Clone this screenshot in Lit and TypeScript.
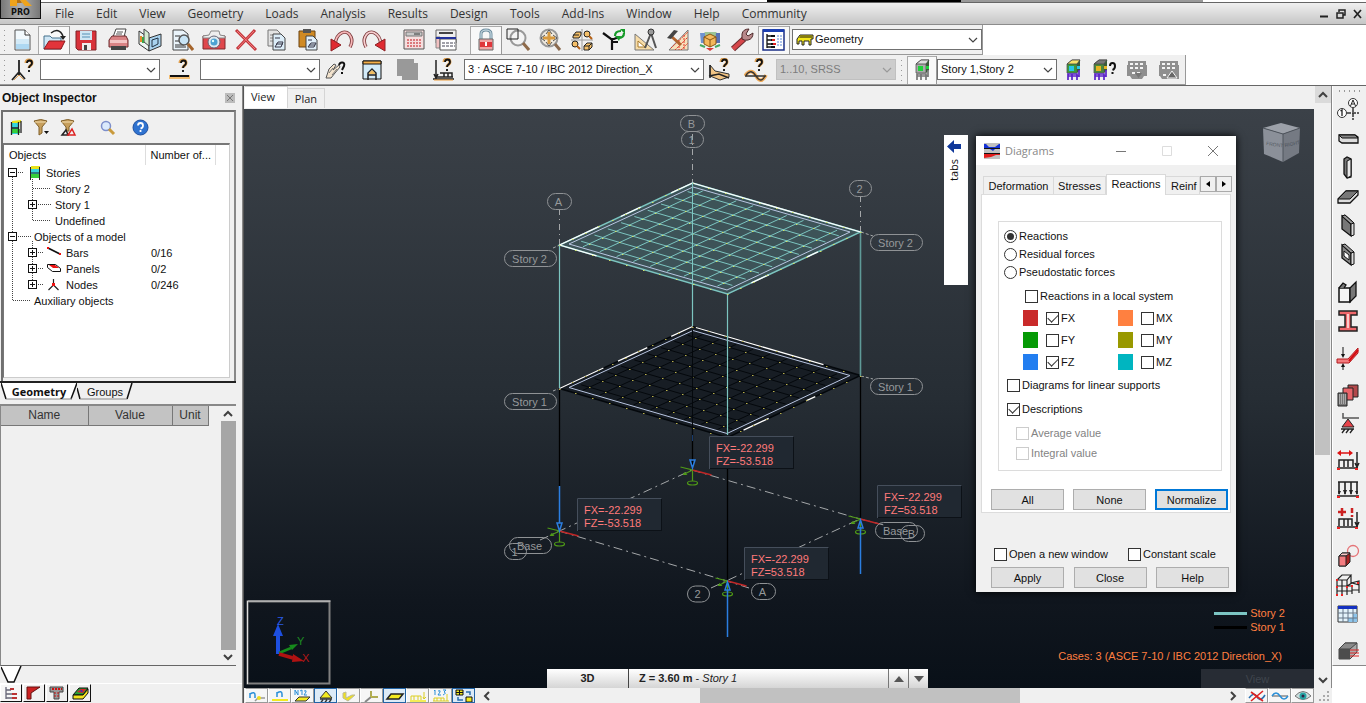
import { LitElement, html, css, svg, nothing } from "lit";
import type { SVGTemplateResult, TemplateResult } from "lit";
import { customElement, property } from "lit/decorators.js";
import { classMap } from "lit/directives/class-map.js";
import { styleMap } from "lit/directives/style-map.js";

/* ------------------------------------------------------------------ icons */

const question = (x: number, y: number) => svg`
  <path d="M${x} ${y + 3}q0-3 3-3t3 3q0 1.500-1.500 2.500T${x + 3} ${y + 8}" fill="none" stroke="#e0a050" stroke-width="3"/>
  <path d="M${x + 1} ${y + 3}q0-2.500 2.500-2.500t2.500 2.500q0 1.500-1.500 2.500T${x + 3} ${y + 8}M${x + 3} ${y + 10}v2" fill="none" stroke="#111" stroke-width="1.800"/>`;

const building = (roof: string, wall: string, win: string, leg: string) => svg`
  <path d="M6 6l5-4h8l-3 4v9H6z" fill="${wall}" stroke="#555" stroke-width=".8"/>
  <path d="M6 6l5-4h8l-3 4z" fill="${roof}" stroke="#444" stroke-width=".8"/>
  <path d="M16 6l3-4v10l-3 3z" fill="#3b5a3b"/>
  <path d="M8 8h5v5H8zM16 8h3v3h-3z" fill="${win}"/>
  <path d="M7 22v-6h9v6M18 19v-7M11 22v-6M7 18h11" fill="none" stroke="${leg}" stroke-width="1.700"/>`;

const icons: Record<string, SVGTemplateResult> = {
  fresh: svg`<path d="M5 2h10l5 5v15H5z" fill="#f2f9fd" stroke="#555"/><path d="M6 11h13v5H6z" fill="#d3eaf7"/><path d="M6 16h13v5H6z" fill="#aed8f2"/><path d="M15 2v5h5" fill="#fff" stroke="#333"/>`,
  open: svg`<path d="M2 21V8h6l2 2h9v11z" fill="#cfe6f5" stroke="#45708c"/><path d="M2 21l5-8h16l-4 8z" fill="#e2343b" stroke="#8c1a1f"/><path d="M9 5q8-6 12 3" fill="none" stroke="#222" stroke-width="1.500"/><path d="M18 8h6l-3 4z" fill="#222"/>`,
  save: svg`<path d="M2 3h20v19H4l-2-2z" fill="#d8323a" stroke="#7c2226"/><path d="M6 3h12v9H6z" fill="#cfe6f3"/><path d="M8 6h8M8 9h8" stroke="#5590b5"/><path d="M8 15h9v7H8z" fill="#eee"/><path d="M10 17h3v5h-3z" fill="#444"/>`,
  print: svg`<path d="M7 9l3-8h10l-2 8z" fill="#fff" stroke="#444"/><path d="M11 4h6M10 6h6" stroke="#555"/><path d="M3 12l3-4h14l2 4v7H3z" fill="#d98385" stroke="#6d2b2d"/><path d="M4 12h17v3H4z" fill="#f3c4c4"/><path d="M5 18h15v4H5z" fill="#444"/>`,
  book: svg`<path d="M1 3l10 7v13L1 16z" fill="#eef6f2" stroke="#333"/><path d="M23 6l-12 4v13l12-5z" fill="#a9d3ef" stroke="#333"/><path d="M6 1v13l5 4V5z" fill="#d5ecd2" stroke="#444"/><path d="M14 12l6-2v6l-6 3z" fill="none" stroke="#234"/><path d="M3 8v6" stroke="#e58b2b" stroke-width="2"/><path d="M5 9v6" stroke="#3aa648" stroke-width="2"/>`,
  preview: svg`<path d="M3 2h10l5 4v16H3z" fill="#eaf4fb" stroke="#444"/><path d="M5 8h5M5 13h4M5 17h9M5 19h11" stroke="#333"/><circle cx="14" cy="12" r="5" fill="#c7e4f6" stroke="#555" stroke-width="1.500"/><path d="M18 16l5 6" stroke="#a5642b" stroke-width="3"/>`,
  camera: svg`<path d="M1 8h22v13H1z" fill="#e0474c" stroke="#7e2a2d"/><path d="M1 8l6-1 2-4h8l1 4 5 1v2H1z" fill="#eee" stroke="#888"/><circle cx="12" cy="14" r="6" fill="#dfe9ef" stroke="#667"/><circle cx="12" cy="14" r="3.500" fill="#4ba3d3"/><circle cx="11" cy="13" r="1.200" fill="#dff"/>`,
  cross: svg`<path d="M2 2l20 20M21 2L3 21" stroke="#c4383d" stroke-width="3"/><path d="M3 3l18 18M20 3L4 20" stroke="#f07a7d"/>`,
  copy: svg`<path d="M2 2h9l3 3v13H2z" fill="#e3e3e3" stroke="#777"/><path d="M4 7h5M4 10h5M4 13h5" stroke="#888"/><path d="M7 6h8l4 4v12H7z" fill="#dcedf8" stroke="#444"/><path d="M9 10h5M9 19l3-5h5l-2 5zM10 16h7" fill="none" stroke="#334"/>`,
  paste: svg`<path d="M1 3h16v16H1z" fill="#d08a24" stroke="#6a4310"/><path d="M5 1h8v4H5z" fill="#555"/><path d="M8 8h7l4 4v10H8z" fill="#e0effa" stroke="#444"/><path d="M10 12h4M10 19l3-4h5l-2 4zM11 17h6" fill="none" stroke="#334"/>`,
  undo: svg`<path d="M5 17C6 4 17 0 21 9q2 5-1 10" fill="none" stroke="#7b3a3c" stroke-width="3.500"/><path d="M5 17C6 4 17 0 21 9q2 5-1 10" fill="none" stroke="#f6b6b7" stroke-width="1.800"/><path d="M1 11v12l10-6z" fill="#e02a31" stroke="#8d2226"/>`,
  redo: svg`<path d="M19 17C18 4 7 0 3 9q-2 5 1 10" fill="none" stroke="#7b3a3c" stroke-width="3.500"/><path d="M19 17C18 4 7 0 3 9q-2 5 1 10" fill="none" stroke="#f8cfd0" stroke-width="1.800"/><path d="M23 11v12l-10-6z" fill="#e02a31" stroke="#8d2226"/>`,
  calc: svg`<path d="M2 2h20v19H2z" fill="#f6dede" stroke="#555"/><path d="M4 4h16v4H4z" fill="#c9c9c9" stroke="#777"/><path d="M12 6h6" stroke="#333"/><path d="M5 12h15M5 15h15M5 18h15" stroke="#d4585c" stroke-width="1.500" stroke-dasharray="2 1"/>`,
  calc2: svg`<path d="M2 2h20v13H2z" fill="#eee" stroke="#666"/><path d="M5 5h14" stroke="#444" stroke-width="2"/><path d="M2 9h4v11H2z" fill="#f2c0c1" stroke="#888"/><path d="M6 11h16v11H6z" fill="#fff" stroke="#555"/><path d="M2 10h20" stroke="#23329a" stroke-width="2"/><path d="M8 15h13M8 18h13" stroke="#445" stroke-dasharray="3 1"/>`,
  lock: svg`<path d="M7 11V6q0-4 5-4t5 4v5" fill="none" stroke="#708fa0" stroke-width="3"/><path d="M7 11V6q0-4 5-4t5 4v5" fill="none" stroke="#d7e7ef"/><path d="M5 11h14v11H5z" fill="#f0a5a6" stroke="#666"/><path d="M6 14h12v5H6z" fill="#e0363c"/><path d="M11 14h2v4h-2z" fill="#fff"/>`,
  zoomwin: svg`<circle cx="12" cy="10" r="7.500" fill="#f4f4f4" stroke="#999" stroke-width="2"/><path d="M17 15l6 7" stroke="#8e6a4a" stroke-width="3"/><path d="M1 1h11v10H1z" fill="none" stroke="#222"/>`,
  zoomall: svg`<circle cx="11" cy="10" r="8.500" fill="#f0eadf" stroke="#999" stroke-width="2"/><path d="M17 16l5 6" stroke="#8a6a4e" stroke-width="3"/><path d="M11 4v12M5 10h12" stroke="#d89a3f" stroke-width="3"/><path d="M8 6l3-4 3 4M8 14l3 4 3-4M7 7l-4 3 4 3M15 7l4 3-4 3" fill="none" stroke="#555"/>`,
  views: svg`<path d="M12 1v22M1 12h22" stroke="#999"/><path d="M3 8l3-4h5v3l-2 3H3zM3 7h6" fill="#f5c069" stroke="#222"/><circle cx="17" cy="6" r="3" fill="#f5c069" stroke="#222"/><path d="M19 8l3 3" stroke="#b45f12" stroke-width="2"/><circle cx="5" cy="16" r="3" fill="#f5c069" stroke="#222"/><path d="M7 18l3 3" stroke="#b45f12" stroke-width="2"/><path d="M14 22v-4l3-3h5v4l-3 3zM14 18h5v4M19 18l3-3" fill="#f5c069" stroke="#222"/>`,
  nodes: svg`<path d="M1 5l8 6h3l5-2M10 11v11M10 14h6" fill="none" stroke="#111" stroke-width="2.200"/><path d="M13 8q0-5 6-5M22 5q0 5-6 5" fill="none" stroke="#159a28" stroke-width="2.200"/><path d="M18 1h5v5zM17 13l-4-5h6z" fill="#159a28"/>`,
  compass: svg`<path d="M1 6v16h19z" fill="#f7dca8" stroke="#777"/><path d="M4 13v6h7z" fill="#fff" stroke="#a87b28"/><path d="M17 5l-6 15M17 5l5 15" stroke="#555" stroke-width="2"/><circle cx="17" cy="4" r="3" fill="#999" stroke="#333"/>`,
  hatch: svg`<path d="M3 22L22 2v20z" fill="#f6e0bb" stroke="#777"/><path d="M9 22L22 9M15 22l7-7M13 12v10M18 7v15M5 20L22 4" stroke="#e23a2d" stroke-dasharray="2 1"/><path d="M6 9l9 8" stroke="#b0632e" stroke-width="3"/><path d="M1 10l7-8 4 1-7 8z" fill="#444"/>`,
  cube: svg`<path d="M3 8l4-4h11l4 4-4 2H7z" fill="#9cc496"/><path d="M2 5h5v10H3z" fill="#6f93d0"/><path d="M18 5h4v10h-5z" fill="#5a72b4"/><path d="M12 6l6 3v7l-6 3-6-3V9z" fill="#f3b85c" stroke="#8a5712"/><path d="M6 9l6 3 6-3M12 12v7" fill="none" stroke="#8a5712"/><path d="M2 17l5 2M22 17l-5 2" stroke="#4a6" stroke-width="2"/><path d="M8 20l4 3 4-3" fill="#d53a3a"/>`,
  wrench: svg`<path d="M3 21L14 11" stroke="#6b2d2f" stroke-width="6"/><path d="M3 21L14 11" stroke="#d6474b" stroke-width="4"/><path d="M12 6q1-5 7-5l-3 5 2 2 5-3q0 6-5 7-3 1-6-1z" fill="#b9898b" stroke="#4f2a2b"/>`,
  inspector: svg`<path d="M1 2h21v20H1z" fill="#fff" stroke="#1b2f86" stroke-width="1.500"/><path d="M1 1h21v3H1z" fill="#1d3fb0"/><path d="M5 6v14M5 8h4M5 12h4M5 16h4M5 19h4" fill="none" stroke="#111" stroke-width="1.300"/><path d="M9 8h4M9 12h3M9 16h4M9 19h4" stroke="#111" stroke-width="2"/><path d="M15 8h5M15 11h5M15 14h5M15 17h5" stroke="#5b86d8" stroke-dasharray="2 1"/><path d="M10 12h3M11 16h3" stroke="#d22" stroke-width="2"/>`,
  nodeq: svg`<path d="M8 2v12L1 22M8 14l6 7M8 14v4" fill="none" stroke="#222" stroke-width="1.800"/><path d="M3 22l5-5 5 5" fill="none" stroke="#e0a050"/>${question(15, 2)}`,
  barq: svg`<path d="M1 19h21" stroke="#f2bd72" stroke-width="4"/><path d="M2 18h19" stroke="#111" stroke-width="2"/>${question(12, 2)}`,
  handq: svg`<path d="M2 20l3-9 5-5 2 1-3 5 6-5 1 2-5 6-4 5z" fill="#f3e3cd" stroke="#555"/><path d="M5 15l4-5M8 17l5-6" stroke="#777"/><path d="M15 7q1-3 3.500-2.500T20 8l-2 4M18 14v2" fill="none" stroke="#111" stroke-width="2"/>`,
  view3: svg`<path d="M3 3h18v18H3z" fill="#d2eaf8" stroke="#111"/><path d="M3 3h18v3H3z" fill="#f5b04a" stroke="#111"/><path d="M8 22v-7l4-4 4 4v7M8 17h8" fill="none" stroke="#222" stroke-width="1.500"/><path d="M9 15l3-3 3 3v1H9z" fill="#f0bd62"/>`,
  solid: svg`<path d="M1 1h17v4h4v17H6v-4H1z" fill="#999"/>`,
  loadq: svg`<path d="M4 2v18M2 16l2 4 2-4M1 21h21" fill="none" stroke="#222" stroke-width="1.500"/><path d="M5 19h16M8 15h12v4M12 15v4M16 15v4" fill="none" stroke="#222" stroke-width="1.500"/><path d="M2 22h19" stroke="#ef9d3a"/>${question(12, 1)}`,
  diagq: svg`<path d="M2 7l5 6 14 3v3l-9 3-10-4z" fill="#f2c585" stroke="#333"/><path d="M2 7v13M1 18l10-2 10 4" fill="none" stroke="#222" stroke-width="1.500"/>${question(13, 1)}`,
  waveq: svg`<path d="M1 18q6-9 11 0t10-1" fill="none" stroke="#eea855" stroke-width="3.500"/><path d="M1 18h21M2 17q5-7 10 1t9 0" fill="none" stroke="#333" stroke-width="1.300"/>${question(12, 1)}`,
  bld1: building("#ddd", "#aaa", "#1fd13b", "#777"),
  bld2: building("#f6e36a", "#3a9b3a", "#25c7e8", "#5a22c8"),
  bldq: svg`<g transform="translate(-5 0)">${building("#777", "#4a8a3a", "#e6b422", "#5a22c8")}</g><path d="M17 8q0-3 2.500-3T22 8t-2.500 4M19.500 14v2" fill="none" stroke="#111" stroke-width="2"/>`,
  down3: svg`<path d="M3 3h18v4h1v11h-3l-2 3H7l-2-3H2V7h1z" fill="#8f8f8f"/><path d="M5 6h14M5 10h14M7 15h10" stroke="#f4f4f4" stroke-width="2" stroke-dasharray="3 2"/><path d="M10 15h7l-3.500 5z" fill="#777"/>`,
  up3: svg`<path d="M3 3h18v4h1v14H5l-2-3H2V7h1z" fill="#8f8f8f"/><path d="M5 6h14M5 10h14M6 17h5" stroke="#f4f4f4" stroke-width="2" stroke-dasharray="3 2"/><path d="M15 13l5 7H10z" fill="#666" stroke="#f4f4f4"/>`,
  axis: svg`<circle cx="17" cy="5" r="4.500" fill="#fff" stroke="#333"/><path d="M14.500 8L17 2l2.500 6M15.500 6h3" fill="none" stroke="#222"/><circle cx="6" cy="15" r="4.500" fill="#fff" stroke="#333"/><path d="M4.500 13L6 12v6" fill="none" stroke="#222" stroke-width="1.300"/><path d="M11 15h12M17 10v12" stroke="#333" stroke-width="1.500" stroke-dasharray="4 1"/>`,
  beam: svg`<path d="M3 8h16l3 2v6H6l-3-2z" fill="#ddd" stroke="#111" stroke-width="1.300"/><path d="M3 8h16l3 3H6z" fill="#888" stroke="#111"/>`,
  column: svg`<path d="M8 3l3-2 4 2v18l-4 1-3-4z" fill="#777" stroke="#111" stroke-width="1.300"/><path d="M11 5l4-2v17l-4 2z" fill="#e8e8e8" stroke="#111"/>`,
  slab: svg`<path d="M2 14l8-8h12v4l-8 8H2z" fill="#ddd" stroke="#111" stroke-width="1.300"/><path d="M2 14l8-8h12l-8 8z" fill="#777" stroke="#111"/>`,
  wall: svg`<path d="M6 2l9 8v12L6 15z" fill="#777" stroke="#111" stroke-width="1.300"/><path d="M6 2l3-1 9 8v12l-3 1V10z" fill="#ddd" stroke="#111"/><path d="M6 2l3-1 9 8-3 1z" fill="#999" stroke="#111"/>`,
  opening: svg`<path d="M6 2l9 8v12L6 15z" fill="#888" stroke="#111" stroke-width="1.300"/><path d="M8 8l5 4v5l-5-4z" fill="#fff" stroke="#111"/><path d="M15 10l3-1v12l-3 1z" fill="#ddd" stroke="#111"/><path d="M6 2l3-1 9 8-3 1z" fill="#999" stroke="#111"/>`,
  cladding: svg`<path d="M3 8h11v14H3z" fill="#f4f4f4" stroke="#111" stroke-width="1.500"/><path d="M3 8l4-5 3 2-2 3M14 8l6-6v14l-6 6z" fill="#777" stroke="#111" stroke-width="1.300"/>`,
  section: svg`<path d="M3 2h18v4h-6v12h6v4H3v-4h6V6H3z" fill="#f0676b" stroke="#222" stroke-width="1.500"/><path d="M11 5h2v14h-2z" fill="#fbcaca"/>`,
  thickness: svg`<path d="M1 13h11L22 2v5l-9 10H1z" fill="#f27a7c" stroke="#b31a1e"/><path d="M13 15L22 4" stroke="#d30d12" stroke-width="2"/><path d="M7 1v8M7 24v-4" stroke="#111"/><path d="M5 8h4l-2 4zM5 21h4l-2-4z" fill="#111"/>`,
  layers: svg`<path d="M12 2h10v12H12z" fill="#b2484b" stroke="#222"/><path d="M7 5h10v12H7z" fill="#e8646a" stroke="#222"/><path d="M2 10h9v13H2z" fill="#777" stroke="#222"/><path d="M3 12h8M3 14h8M3 16h8M3 18h8M3 20h8" stroke="#ddd" stroke-dasharray="1 1"/>`,
  support: svg`<path d="M7 1v5h16" fill="none" stroke="#555" stroke-width="1.500"/><path d="M12 7l6 8H6z" fill="#e8434a" stroke="#222"/><path d="M5 17h13M6 21l3-4M10 21l3-4M14 21l3-4" stroke="#222" stroke-width="1.300"/>`,
  loadcase: svg`<path d="M4 4h10" stroke="#d11" stroke-width="1.500"/><path d="M1 4l4-3v6zM17 4l-4-3v6z" fill="#d11"/><path d="M1 19h21M3 18v-7h14v7M8 11v7M12 11v7M21 3v14M19 14l2 4 2-4" fill="none" stroke="#222" stroke-width="1.500"/><path d="M1 20h3M19 20h3" stroke="#e22" stroke-width="2"/>`,
  loads: svg`<path d="M2 4h20M3 4v12M9 4v12M15 4v12M21 4v12M1 18h22" fill="none" stroke="#222" stroke-width="1.600"/><path d="M7 12l2 5 2-5zM13 12l2 5 2-5zM2 13l1 4 2-4zM19 13l2 4 1-4z" fill="#222"/><path d="M1 19h3M20 19h3" stroke="#e22" stroke-width="2"/>`,
  combos: svg`<path d="M6 1v8M2 5h8M16 1v5M16 8v2" stroke="#c22" stroke-width="2.500"/><path d="M1 20h21M3 19v-7h13v7M8 12v7M12 12v7M21 5v13M19 15l2 4 2-4" fill="none" stroke="#222" stroke-width="1.500"/><path d="M1 21h3M19 21h3" stroke="#e22" stroke-width="2"/>`,
  solids: svg`<circle cx="17" cy="7" r="5.500" fill="none" stroke="#e57377" stroke-width="1.300"/><path d="M3 12l3-3h8v9l-4 4H3z" fill="#a22" stroke="#222"/><path d="M3 12l3-3h8l-4 3z" fill="#f9c5c6" stroke="#222"/><path d="M3 12h7v10H3z" fill="#f47c80" stroke="#222"/>`,
  frame: svg`<path d="M1 7l5-5h9l-4 5H1v15M11 7v15M6 7v15M1 13h15M15 2v8l8-2v12M16 13v8M11 13l5-3 7 2M1 18h15M16 17h7" fill="none" stroke="#222" stroke-width="1.200"/><path d="M1 6v2M1 13v2M11 13v2M16 12v2M22 9v2M6 21v2M1 21v2" stroke="#e22" stroke-width="2"/>`,
  table: svg`<path d="M2 4h19v16H2z" fill="#e4f3fb" stroke="#333"/><path d="M2 4h19v3H2z" fill="#1430c0"/><path d="M17 12h4v8h-4zM12 16h5v4h-5z" fill="#8cc4ea"/><path d="M7 7v13M12 7v13M17 7v13M2 11h19M2 16h19" stroke="#678"/>`,
  results: svg`<path d="M3 10l6-6h12v9l-7 7H3z" fill="#aaa" stroke="#444"/><path d="M3 10l6-6h12l-7 6z" fill="#8a8a8a" stroke="#444"/><path d="M3 10h11v10H3z" fill="#4c4c4c"/><path d="M14 11h9M14 14h9M14 17h9" stroke="#d22"/>`,
};

const icon = (name: string, size = 24) =>
  html`<svg class="icon" width=${size} height=${size} viewBox="0 0 24 24" aria-hidden="true">${icons[name]}</svg>`;

const chevron = html`<svg class="chev" width="10" height="6" viewBox="0 0 10 6" aria-hidden="true"><path d="M1 1l4 4 4-4" fill="none" stroke="currentColor" stroke-width="1.200"/></svg>`;

const arrow = (dir: "up" | "down" | "left" | "right") => {
  const d = { up: "M1 7l4-4 4 4", down: "M1 3l4 4 4-4", left: "M7 1L3 5l4 4", right: "M3 1l4 4-4 4" }[dir];
  return html`<svg width="10" height="10" viewBox="0 0 10 10" aria-hidden="true"><path d="${d}" fill="none" stroke="#404040" stroke-width="2"/></svg>`;
};

const base = css`
  * { box-sizing: border-box; }
  svg { display: block; flex: none; }
  button {
    font: inherit;
    color: inherit;
    margin: 0;
    padding: 0;
    border: 0;
    border-radius: 0;
    background: none;
    display: flex;
    align-items: center;
    justify-content: center;
  }
`;

/* ------------------------------------------------------- object inspector */

type Row = { label: string; count?: string; level: 1 | 2; text: number; art: SVGTemplateResult };

const box = (x: number, minus: boolean) => svg`
  <rect x="${x - 4}.5" y="3.500" width="8" height="8" fill="#fff" stroke="#111"/>
  <path d="M${x - 2} 7.500h5${minus ? "" : `M${x}.5 5v5`}" stroke="#111"/>`;
const dots = (d: string) => svg`<path d="${d}" fill="none" stroke="#444" stroke-dasharray="1 1"/>`;

const rows: Row[] = [
  { label: "Stories", level: 1, text: 42, art: svg`${dots("M8.500 8v8M14 7.500h6M28.500 12v4")}${box(8, true)}<path d="M27 2h9v11h-9z" fill="#35d6dd"/><path d="M27 1h9v3h-9z" fill="#e9e21a"/><path d="M27 9h9v4h-9z" fill="#36cf3c"/><path d="M26.500 2v13M35.500 2v13M27 8h8" stroke="#222"/>` },
  { label: "Story 2", level: 2, text: 51, art: dots("M8.500 0v16M28.500 0v16M29 7.500h18") },
  { label: "Story 1", level: 2, text: 51, art: svg`${dots("M8.500 0v16M28.500 0v16M34 7.500h13")}${box(28, false)}` },
  { label: "Undefined", level: 2, text: 51, art: dots("M8.500 0v16M28.500 0v8M29 7.500h18") },
  { label: "Objects of a model", level: 1, text: 30, art: svg`${dots("M8.500 0v16M14 7.500h13M28.500 12v4")}${box(8, true)}` },
  { label: "Bars", count: "0/16", level: 2, text: 62, art: svg`${dots("M8.500 0v16M28.500 0v16M34 7.500h6")}${box(28, false)}<path d="M44 3l12 6" stroke="#111" stroke-width="1.800"/><path d="M43 2h2v2h-2zM55 8h2v2h-2z" fill="#e11"/>` },
  { label: "Panels", count: "0/2", level: 2, text: 62, art: svg`${dots("M8.500 0v16M28.500 0v16M34 7.500h6")}${box(28, false)}<path d="M43.500 3.500h8l5 4v3h-8l-5-4z" fill="#fff" stroke="#111"/><path d="M45 4h6l4 3h-6z" fill="#e11"/>` },
  { label: "Nodes", count: "0/246", level: 2, text: 62, art: svg`${dots("M8.500 0v16M28.500 0v8M34 7.500h6")}${box(28, false)}<path d="M49.500 2v6l-5 5M49.500 8l5 5" fill="none" stroke="#222" stroke-width="1.200"/><path d="M48 6h3v3h-3z" fill="#e11"/>` },
  { label: "Auxiliary objects", level: 1, text: 30, art: dots("M8.500 0v8M9 7.500h18") },
];

@customElement("object-inspector")
export class ObjectInspector extends LitElement {
  static styles = [
    base,
    css`
      :host { display: flex; flex-direction: column; font: 11px/16px "Liberation Sans", Arial, sans-serif; color: #111; background: #f0f0f0; }
      .title { display: flex; align-items: center; justify-content: space-between; height: 24px; padding: 0 7px 0 2px; font-size: 12px; font-weight: bold; }
      .close { width: 10px; height: 10px; background: #bcbcbc; }
      .panel { margin: 0 6px 0 1px; border: 2px solid #707070; border-right-color: #888; border-bottom: 0; display: flex; flex-direction: column; height: 271px; }
      .bar { display: flex; align-items: center; height: 31px; flex: none; gap: 8px; padding-left: 4px; }
      .bar button { width: 18px; height: 20px; }
      .bar .wide { margin-left: 14px; }
      .bar .help { margin-left: 6px; }
      .list { flex: 1; background: #fff; border: 1px solid #777; border-width: 2px 1px 1px 1px; border-right-color: #ccc; border-bottom-color: #ccc; margin: 0 4px 3px 0; overflow: hidden; }
      table { border-collapse: collapse; width: 100%; table-layout: fixed; }
      th, td { padding: 0; text-align: left; font-weight: normal; }
      th { height: 20px; padding: 0 5px; white-space: nowrap; border-right: 1px solid #ddd; }
      th:last-child { border: 0; }
      .c1 { width: 141px; }
      .c2 { width: 70px; }
      td { height: 16px; }
      td + td { padding-left: 6px; }
      .node { display: grid; height: 16px; white-space: nowrap; }
      .node > * { grid-area: 1 / 1; }
      .tabs { display: flex; height: 19px; margin-right: 6px; border-top: 2px solid #222; padding-left: 1px; }
      .tab { display: grid; place-items: center; height: 17px; }
      .tab > * { grid-area: 1 / 1; }
      .tab.on span { font: bold 11px/16px "Open Sans", sans-serif; }
      .props { flex: 1; display: flex; margin: 4px 6px 0 0; border-top: 2px solid #888; border-bottom: 1px solid #666; border-left: 1px solid #888; min-height: 0; }
      .head { flex: 1; }
      .head table { width: 207px; font-size: 12px; color: #333; }
      .head th { height: 19px; background: #c3c3c3; border: 1px solid #777; border-top: 0; border-left: 0; text-align: center; padding: 0; }
      .k1 { width: 87px; }
      .k2 { width: 84px; }
      .k3 { width: 36px; }
      .scroll { width: 16px; display: flex; flex-direction: column; align-items: center; padding: 3px 0; gap: 2px; }
      .thumb { flex: 1; width: 15px; background: #a6a6a6; }
      .foot { height: 17px; padding-left: 1px; }
      .views { height: 20px; display: flex; border-top: 1px solid #fff; gap: 1px; }
      .views button { width: 22px; height: 18px; border: 1px solid #fff; border-right: 1px solid #111; border-bottom: 1px solid #111; }
      .views button:first-child { background: #f6f6f6; }
    `,
  ];

  render() {
    return html`
      <div class="title"><span>Object Inspector</span>
        <button class="close" aria-label="Close"><svg width="8" height="8" viewBox="0 0 8 8"><path d="M1 1l6 6M7 1L1 7" stroke="#777"/></svg></button>
      </div>
      <div class="panel">
        <div class="bar">
          <button aria-label="Stories"><svg width="14" height="18" viewBox="0 0 14 18"><path d="M3 3h7v12H3z" fill="#35d6dd"/><path d="M3 2l9-1v3H3z" fill="#e9e21a"/><path d="M3 10h8v4H3z" fill="#36cf3c"/><path d="M2.500 3v13M9.500 3v13M12 2v12M2 9h8" stroke="#222" stroke-width="1.300"/></svg></button>
          <button aria-label="Filter"><svg width="18" height="18" viewBox="0 0 18 18"><path d="M1 2q7-3 13 0L9 8v6l-3 2V8z" fill="#c79f5c" stroke="#80602a"/><path d="M2 3h11" stroke="#f4dfb2"/><path d="M11 12h5l-2.500 3z" fill="#111"/></svg></button>
          <button aria-label="Filter nodes"><svg width="18" height="18" viewBox="0 0 18 18"><path d="M2 2q7-3 13 0l-5 6v4H7V8z" fill="#c79f5c" stroke="#80602a"/><path d="M3 3h11" stroke="#f4dfb2"/><path d="M3 16l4-5 2 5z" fill="none" stroke="#222" stroke-width="1.500"/><path d="M9 16l4-6 3 6z" fill="none" stroke="#d22" stroke-width="1.500"/></svg></button>
          <button class="wide" aria-label="Find"><svg width="16" height="16" viewBox="0 0 16 16"><circle cx="6" cy="6" r="4.500" fill="#dbeafc" stroke="#7d8fcb" stroke-width="1.500"/><path d="M9 9l5 5" stroke="#c99a3c" stroke-width="3"/></svg></button>
          <button class="help" aria-label="Help"><svg width="17" height="17" viewBox="0 0 17 17"><circle cx="8.500" cy="8.500" r="7.500" fill="#2f73d0" stroke="#1e4f9e"/><path d="M6 6.500Q6 4 8.500 4T11 6.500t-2.500 3M8.500 11v2" fill="none" stroke="#fff" stroke-width="1.800"/></svg></button>
        </div>
        <div class="list">
          <table>
            <thead><tr><th class="c1">Objects</th><th class="c2">Number of...</th><th></th></tr></thead>
            <tbody>
              ${rows.map(
                (r) => html`<tr>
                  <td><div class="node">
                    <svg width="60" height="16" viewBox="0 0 60 16" aria-hidden="true">${r.art}</svg>
                    <span style=${styleMap({ paddingLeft: `${r.text}px` })}>${r.label}</span>
                  </div></td>
                  <td>${r.count ?? nothing}</td><td></td>
                </tr>`
              )}
            </tbody>
          </table>
        </div>
      </div>
      <div class="tabs">
        <button class="tab on"><svg width="76" height="17" viewBox="0 0 76 17"><path d="M0 0l5 16h66l5-16z" fill="#fff"/><path d="M0 0l5 16M70 16L76 0" stroke="#111" stroke-width="1.500"/><path d="M5 16h66" stroke="#888"/></svg><span>Geometry</span></button>
        <button class="tab"><svg width="56" height="17" viewBox="0 0 56 17"><path d="M0 5l3 11M50 16l5-16" stroke="#111" stroke-width="1.500"/><path d="M3 16h47" stroke="#888"/></svg><span>Groups</span></button>
      </div>
      <div class="props">
        <div class="head"><table>
          <thead><tr><th class="k1">Name</th><th class="k2">Value</th><th class="k3">Unit</th></tr></thead>
        </table></div>
        <div class="scroll">${arrow("up")}<div class="thumb"></div>${arrow("down")}</div>
      </div>
      <div class="foot"><svg width="22" height="17" viewBox="0 0 22 17"><path d="M0 0l7 16h6l7-16z" fill="#fff"/><path d="M0 1l7 15h6l7-16" fill="none" stroke="#111" stroke-width="1.500"/></svg></div>
      <div class="views">
        <button aria-label="Objects"><svg width="16" height="14" viewBox="0 0 16 14"><path d="M3 1v12M3 4h5M3 8h7M3 12h7" fill="none" stroke="#667" stroke-width="1.300"/><path d="M7 3h4M9 8h5M9 12h5" stroke="#b33" stroke-width="2"/></svg></button>
        <button aria-label="Sections"><svg width="16" height="14" viewBox="0 0 16 14"><path d="M1 1h13L5 7v6H1z" fill="#c22" stroke="#611"/></svg></button>
        <button aria-label="Connections"><svg width="16" height="14" viewBox="0 0 16 14"><path d="M1 1h13v5h-4v7H5V6H1z" fill="#999" stroke="#444"/><path d="M3 3h10" stroke="#c11" stroke-width="2" stroke-dasharray="2 1"/><path d="M6 6v6M9 6v6" stroke="#c11" stroke-dasharray="2 1"/></svg></button>
        <button aria-label="Maps"><svg width="17" height="14" viewBox="0 0 17 14"><path d="M1 9l6-7h9l-5 7z" fill="#27a034" stroke="#111"/><path d="M5 6l4-3h5l-3 4z" fill="#d22"/><path d="M7 5l3-1 1 2z" fill="#23c"/><path d="M1 9h10l5-6v4l-5 6H1z" fill="#f2e21c" stroke="#111"/></svg></button>
      </div>
    `;
  }
}

/* ---------------------------------------------------------------- canvas */

type P = [number, number];
type Edge = "LT" | "TR" | "LB" | "BR";
const mix = (a: P, b: P, t: number): P => [a[0] + (b[0] - a[0]) * t, a[1] + (b[1] - a[1]) * t];
const pts = (list: P[]) => list.map((p) => p.map((n) => Math.round(n * 10) / 10).join(",")).join(" ");

const slab = (dy: number, line: string, fill: string, dot: string, lit: [Edge, number, number][]) => {
  const T: P = [692.5, 183 + dy], R: P = [860.5, 232 + dy], B: P = [727.5, 294 + dy], L: P = [559.5, 245 + dy];
  const ends: Record<Edge, [P, P]> = { LT: [L, T], TR: [T, R], LB: [L, B], BR: [B, R] };
  const mesh: SVGTemplateResult[] = [];
  const marks: SVGTemplateResult[] = [];
  for (let i = 1; i < 10; i++) {
    const t = i / 10;
    mesh.push(svg`<polyline points="${pts([mix(mix(T, R, t), mix(L, B, t), 0.05), mix(mix(T, R, t), mix(L, B, t), 0.95)])}"/>`);
    mesh.push(svg`<polyline points="${pts([mix(mix(T, L, t), mix(R, B, t), 0.05), mix(mix(T, L, t), mix(R, B, t), 0.95)])}"/>`);
  }
  for (let i = 0; i <= 10; i++)
    for (let j = 0; j <= 10; j++) {
      const [x, y] = mix(mix(T, R, i / 10), mix(L, B, i / 10), j / 10);
      marks.push(svg`<rect x="${Math.round(x) - 1}" y="${Math.round(y)}" width="1.500" height="1"/>`);
    }
  return svg`
    <polygon points="${pts([T, R, B, L])}" fill="${fill}"/>
    <g stroke="${line}" fill="none">${mesh}<polygon points="${pts([T, R, B, L])}" stroke-width="1.500"/></g>
    <g stroke="#fff" stroke-width="1.300" fill="none">${lit.map(([e, a, b]) => svg`<polyline points="${pts([mix(ends[e][0], ends[e][1], a), mix(ends[e][0], ends[e][1], b)])}"/>`)}</g>
    <polygon points="${pts([[693, 187 + dy], [850, 232 + dy], [727, 290 + dy], [569, 244 + dy]])}" fill="none" stroke="#b9c6e2"/>
    <g fill="${dot}">${marks}</g>`;
};

const pill = (cx: number, cy: number, w: number, t: string) => svg`
  <rect x="${cx - w / 2}" y="${cy - 8}" width="${w}" height="16" rx="8" fill="none" stroke="#8f9295"/>
  <text x="${cx - 1}" y="${cy + 4}" text-anchor="middle" fill="#96999b">${t}</text>`;

const tip = (x: number, y: number, fz: string) => svg`
  <rect x="${x}.5" y="${y}.5" width="84" height="32" fill="#202831" stroke="#0c1117"/>
  <path d="M${x}.5 ${y + 33}V${y}.5h84" fill="none" stroke="#454e5b"/>
  <g fill="#ff7a7a"><text x="${x + 7}" y="${y + 16}">FX=-22.299</text><text x="${x + 7}" y="${y + 29}">${fz}</text></g>`;

const foot = (x: number, y: number) => svg`
  <path d="M${x - 12} ${y - 3}l12 3v11M${x} ${y}l-8 4" stroke="#4f9a17" fill="none" stroke-width="1.200"/>
  <path d="M${x - 10} ${y + 5}l2-3 3 3z" fill="#4f9a17"/>
  <ellipse cx="${x}" cy="${y + 13}" rx="5" ry="2" fill="none" stroke="#4f9a17" stroke-width="1.200"/>
  <path d="M${x} ${y}l19 5" stroke="#c02626" stroke-width="1.300"/>`;

@customElement("model-canvas")
export class ModelCanvas extends LitElement {
  static styles = [
    base,
    css`
      :host { display: block; position: relative; overflow: hidden; background: linear-gradient(#3b4148, #262d34 50%, #10161e 85%, #091018); font: 11px/14px "Liberation Sans", Arial, sans-serif; color: #ff7f40; }
      .scene { width: 1070px; height: 579px; }
      .scene text { font-size: 11px; }
      .tabs { position: absolute; right: 346px; top: 26px; width: 24px; height: 150px; background: #fff; display: flex; flex-direction: column; align-items: center; gap: 6px; padding: 5px 4px 0 0; color: #111; }
      .tabs span { writing-mode: vertical-rl; transform: rotate(180deg); line-height: 16px; font-family: "Open Sans", sans-serif; }
      .cube { position: absolute; right: 9px; top: 10px; }
      .legend { position: absolute; right: 29px; bottom: 54px; display: grid; grid-template-columns: 33px auto; gap: 0 3px; align-items: center; }
      .legend i { height: 3px; background: #7cc5c3; }
      .legend .s1 { background: #000; }
      .cases { position: absolute; right: 32px; bottom: 25px; }
      .viewbtn { position: absolute; right: 0; bottom: 0; width: 113px; height: 19px; background: #272c34; color: #3f454d; }
      .level { position: absolute; left: 303px; bottom: 0; width: 381px; height: 19px; display: flex; background: linear-gradient(#fff, #d5d5d5); color: #222; font-size: 12px; line-height: 19px; }
      .level .mode { width: 82px; border-right: 1px solid #444; font-size: 11px; font-weight: bold; }
      .level .z { flex: 1; padding-left: 10px; font-size: 11px; }
      .level .step { width: 20px; border-left: 1px solid #777; }
      .dialog { position: absolute; right: 78px; top: 27px; width: 260px; }
    `,
  ];

  render() {
    return html`
      <svg class="scene" width="1070" height="579" viewBox="244 109 1070 579" role="img" aria-label="Model view">
        <g fill="none" stroke="#a4a7a9">
          <g stroke-dasharray="6 4 1 4"><path d="M692.500 134v49M559.500 209v36M860.500 196v36"/></g>
          <path d="M861 232l12 4M861 376l12 3M553 248l7-3M553 391l7-3" stroke-dasharray="3 2"/>
          <g stroke-dasharray="9 4 2 4"><path d="M540 540l152-70M559 531l168 50 22 7M692 470l168 49 24 6M711 588l149-69"/></g>
        </g>
        <path d="M692.500 326v142M559.500 388v98M860.500 376v145M727.500 435v147" stroke="#000" stroke-width="1.300"/>
        <path d="M692.500 419v22" stroke="#173a6c"/>
        ${slab(143.5, "#04080c", "#171d24", "#b9b04a", [
          ["LT", 0, 0.33], ["LT", 0.44, 0.66], ["LT", 0.84, 1], ["TR", 0.02, 0.78], ["BR", 0.12, 0.31], ["BR", 0.59, 0.66],
        ])}
        <path d="M692.500 330v105" stroke="#04080c"/>
        <path d="M727.500 294v141M692.500 183v143M559.500 245v143" stroke="#7cc5c0" stroke-width="1.200"/>
        <path d="M860.500 232v144" stroke="#5f9a98" stroke-width="1.600"/>
        ${slab(0, "#7cc5c0", "#3d5358", "#cfe36a", [
          ["LT", 0, 0.3], ["LT", 0.46, 0.61], ["LT", 0.84, 1], ["TR", 0, 1], ["LB", 0, 0.22], ["BR", 0.18, 0.31], ["BR", 0.6, 0.68],
        ])}
        <path d="M692.500 183v112" stroke="#7cc5c0"/>
        ${foot(692.5, 470)}${foot(559.5, 531)}${foot(727.5, 581)}${foot(860.5, 519)}
        <g fill="none" stroke="#2b7ee0" stroke-width="1.500">
          <path d="M690 460h5l-2.500 8zM559.500 486v37M557 523h5l-2.500 8z"/>
          <path d="M727.500 637v-47M725 590h5l-2.500-8zM860.500 574v-47M858 528h5l-2.500-8z"/>
        </g>
        ${tip(709, 436, "FZ=-53.518")}${tip(577, 498, "FZ=-53.518")}${tip(877, 485, "FZ=53.518")}${tip(744, 547, "FZ=53.518")}
        ${pill(692.5, 123.5, 24, "B")}${pill(692.5, 139.5, 22, "1")}${pill(559.5, 201.5, 24, "A")}${pill(860.5, 188.5, 22, "2")}
        ${pill(530.5, 258.5, 52, "Story 2")}${pill(896.5, 242.5, 52, "Story 2")}
        ${pill(530.5, 401.5, 52, "Story 1")}${pill(896.5, 386.5, 52, "Story 1")}
        ${pill(530.5, 545.5, 42, "Base")}${pill(515.5, 551.5, 22, "1")}${pill(896.5, 530.5, 42, "Base")}${pill(912.5, 533.5, 24, "B")}
        ${pill(698.5, 594, 22, "2")}${pill(763.5, 591.5, 24, "A")}
        <rect x="247.500" y="601.500" width="82" height="82" fill="none" stroke="#808080" stroke-width="2"/>
        <path d="M247.500 684v-83h83" fill="none" stroke="#ddd"/>
        <path d="M278 654v-20" stroke="#1d4fe0" stroke-width="4"/><path d="M273 636l5-12 5 12z" fill="#1d4fe0"/>
        <path d="M279 653l12-5" stroke="#168a1c" stroke-width="2.500"/><path d="M289 645l9-1-6 6z" fill="#168a1c"/>
        <path d="M279 654l14 4" stroke="#b01212" stroke-width="3.500"/><path d="M293 654l11 7-12 1z" fill="#b01212"/>
        <text x="277" y="625" fill="#2a5ce8">Z</text><text x="297" y="645" fill="#1d8a22">Y</text><text x="302" y="662" fill="#b51818">X</text>
      </svg>
      <div class="tabs">
        <svg width="14" height="13" viewBox="0 0 14 13"><path d="M0 6.500L7 0v4h7v5H7v4z" fill="#10389a"/></svg>
        <span>tabs</span>
      </div>
      <svg class="cube" width="46" height="46" viewBox="0 0 46 46" aria-hidden="true">
        <path d="M4 9l18-5 19 5-17 6z" fill="#9ca1a9"/><path d="M4 9l20 6v28L5 35z" fill="#8b9099"/><path d="M24 15l17-6-1 25-16 9z" fill="#757a83"/>
        <path d="M4 9l20 6 17-6M24 15v28" fill="none" stroke="#4e545c"/>
        <text x="7" y="26" transform="rotate(8 7 26)" fill="#555b64" font-size="5">FRONT</text>
        <text x="26" y="28" transform="rotate(-12 26 28)" fill="#4b515a" font-size="5">RIGHT</text>
      </svg>
      <div class="legend"><i></i><span>Story 2</span><i class="s1"></i><span>Story 1</span></div>
      <div class="cases">Cases: 3 (ASCE 7-10 / IBC 2012 Direction_X)</div>
      <button class="viewbtn">View</button>
      <div class="level">
        <button class="mode">3D</button>
        <span class="z"><b>Z = 3.60 m</b> - <em>Story 1</em></span>
        <button class="step" aria-label="Level up"><svg width="10" height="6" viewBox="0 0 10 6"><path d="M0 6l5-6 5 6z" fill="#555"/></svg></button>
        <button class="step" aria-label="Level down"><svg width="10" height="6" viewBox="0 0 10 6"><path d="M0 0l5 6 5-6z" fill="#555"/></svg></button>
      </div>
      <diagrams-dialog class="dialog"></diagrams-dialog>
    `;
  }
}

/* ---------------------------------------------------------------- dialog */

@customElement("diagrams-dialog")
export class DiagramsDialog extends LitElement {
  static styles = [
    base,
    css`
      :host { display: block; background: #f0f0f0; color: #111; font: 11px/14px "Liberation Sans", Arial, sans-serif; box-shadow: 0 0 8px #000; padding-bottom: 4px; }
      .title { display: flex; align-items: center; height: 29px; background: #fff; padding: 0 17px 0 8px; gap: 5px; font: 11px/16px "Open Sans", sans-serif; color: #888; }
      .title span { flex: 1; }
      .title button { width: 12px; height: 16px; margin-left: 29px; }
      .tabs { display: flex; align-items: flex-end; height: 29px; margin: 0 4px 0 7px; position: relative; }
      .tabs button { height: 18px; border: 1px solid #d9d9d9; border-bottom: 0; white-space: nowrap; }
      .tabs .t1 { width: 71px; }
      .tabs .t2 { width: 52px; border-left: 0; }
      .tabs .t3 { width: 60px; height: 21px; background: #fff; margin-bottom: -1px; padding-bottom: 2px; }
      .tabs .t4 { flex: 1; justify-content: flex-start; padding-left: 5px; border-left: 0; }
      .tabs .nav { width: 16px; height: 16px; border: 1px solid #aaa; align-self: flex-end; margin-bottom: 2px; background: #f0f0f0; }
      .pane { margin: 0 5px; padding: 26px 0 3px 9px; background: #fff; border: 1px solid #dcdcdc; height: 319px; }
      fieldset { border: 1px solid #dcdcdc; margin: 0 8px 18px 7px; padding: 5px 5px 0; height: 250px; min-width: 0; }
      label { display: flex; align-items: center; gap: 2px; height: 18px; white-space: nowrap; }
      input { appearance: none; margin: 0; width: 13px; height: 13px; border: 1px solid #333; background: #fff; flex: none; display: grid; place-items: center; }
      input[type="radio"] { border-radius: 50%; }
      input[type="radio"]:checked::before { content: ""; width: 7px; height: 7px; border-radius: 50%; background: #333; }
      input[type="checkbox"]:checked::before { content: ""; width: 9px; height: 5px; border: solid #333; border-width: 0 0 1px 1px; transform: translateY(-1px) rotate(-45deg); }
      .off { color: #838383; }
      .off input { border-color: #ccc; }
      .local { padding-left: 21px; margin: 6px 0 5px; }
      .forces { display: grid; grid-template-columns: 15px 64px 15px 60px; gap: 6px 8px; padding-left: 19px; align-items: center; }
      .forces label { height: 16px; }
      .swatch { width: 15px; height: 16px; }
      .wide { padding-left: 3px; margin-top: 6px; }
      .inner { padding-left: 12px; margin-top: 6px; height: 18px; }
      .inner + .inner { margin-top: 2px; }
      .row { display: flex; justify-content: space-between; padding-right: 2px; }
      .push { width: 73px; height: 21px; border: 1px solid #adadad; background: #e1e1e1; }
      .push.main { border: 2px solid #0078d7; }
      .opts { display: grid; grid-template-columns: 134px 1fr; padding: 32px 0 0 18px; }
      .actions { padding: 4px 7px 0 15px; }
    `,
  ];

  private check(label: string, checked = false, cls = "", disabled = false) {
    return html`<label class=${cls + (disabled ? " off" : "")}><input type="checkbox" .checked=${checked} ?disabled=${disabled} />${label}</label>`;
  }

  private force(color: string, label: string, checked = false) {
    return html`<span class="swatch" style=${styleMap({ background: color })}></span>${this.check(label, checked)}`;
  }

  render() {
    return html`
      <div class="title">
        <svg width="16" height="16" viewBox="0 0 16 16"><path d="M0 0h16v16H0z" fill="#c0c0c0"/><path d="M0 1h2l3 3h6l4-3h1v5h-5l-2 2-3-2H0z" fill="#1431d6"/><path d="M0 15v-4h4l4-1h8v2h-4l-5 2z" fill="#e21b1b"/><path d="M0 5.500h16M0 10.500h16" stroke="#111"/></svg>
        <span>Diagrams</span>
        <button aria-label="Minimize"><svg width="12" height="12" viewBox="0 0 12 12"><path d="M1 6.500h10" stroke="#777"/></svg></button>
        <button aria-label="Maximize" disabled><svg width="12" height="12" viewBox="0 0 12 12"><path d="M1.500 1.500h9v9h-9z" fill="none" stroke="#ddd"/></svg></button>
        <button aria-label="Close"><svg width="12" height="12" viewBox="0 0 12 12"><path d="M1 1l10 10M11 1L1 11" stroke="#777"/></svg></button>
      </div>
      <div class="tabs">
        <button class="t1">Deformation</button><button class="t2">Stresses</button><button class="t3">Reactions</button><button class="t4" aria-label="Reinforcement">Reinf</button>
        <button class="nav" aria-label="Previous tabs"><svg width="4" height="6" viewBox="0 0 4 6"><path d="M4 0v6L0 3z"/></svg></button>
        <button class="nav" aria-label="Next tabs"><svg width="4" height="6" viewBox="0 0 4 6"><path d="M0 0v6l4-3z"/></svg></button>
      </div>
      <div class="pane">
        <fieldset>
          <label><input type="radio" name="kind" checked />Reactions</label>
          <label><input type="radio" name="kind" />Residual forces</label>
          <label><input type="radio" name="kind" />Pseudostatic forces</label>
          ${this.check("Reactions in a local system", false, "local")}
          <div class="forces">
            ${this.force("#c92a2a", "FX", true)}${this.force("#ff8040", "MX")}
            ${this.force("#059a05", "FY")}${this.force("#999900", "MY")}
            ${this.force("#227ef0", "FZ", true)}${this.force("#00b5c0", "MZ")}
          </div>
          ${this.check("Diagrams for linear supports", false, "wide")}
          ${this.check("Descriptions", true, "wide")}
          ${this.check("Average value", false, "inner", true)}
          ${this.check("Integral value", false, "inner", true)}
        </fieldset>
        <div class="row"><button class="push">All</button><button class="push">None</button><button class="push main">Normalize</button></div>
      </div>
      <div class="opts">${this.check("Open a new window")}${this.check("Constant scale")}</div>
      <div class="row actions"><button class="push">Apply</button><button class="push">Close</button><button class="push">Help</button></div>
    `;
  }
}

/* ------------------------------------------------------------------ shell */

const menus = ["File", "Edit", "View", "Geometry", "Loads", "Analysis", "Results", "Design", "Tools", "Add-Ins", "Window", "Help", "Community"];

const mainTools: string[][] = [
  ["fresh", "open", "save", "print", "book", "preview", "camera", "cross", "copy", "paste", "undo", "redo"],
  ["calc", "calc2"],
  ["lock", "zoomwin", "zoomall", "views", "nodes", "compass", "hatch", "cube", "wrench", "inspector"],
];
const framed = new Set(["open", "lock", "inspector"]);

const sideTools: string[][] = [
  ["axis", "beam", "column", "slab", "wall", "opening"],
  ["cladding", "section"],
  ["thickness"],
  ["layers", "support"],
  ["loadcase", "loads", "combos"],
  ["solids", "frame", "table"],
  ["results"],
];

const toggles: { name: string; on?: boolean; art: SVGTemplateResult }[] = [
  { name: "Node numbers", art: svg`<path d="M3 4v5M3 5q5-3 5 1v3" fill="none" stroke="#2a8fd8" stroke-width="1.500"/><path d="M8 12l3-3h7" fill="none" stroke="#999" stroke-width="1.500"/><circle cx="12" cy="9" r="2" fill="#f0e020"/>` },
  { name: "Bar numbers", art: svg`<path d="M7 3v5M7 4q5-3 5 1v3" fill="none" stroke="#2a8fd8" stroke-width="1.500"/><path d="M2 11h16" stroke="#f3ea20" stroke-width="2"/>` },
  { name: "Panel numbers", art: svg`<path d="M2 6V1l3 5V1M7 2l2-1v5M11 2q3-1 2 1l-2 3h3" fill="none" stroke="#2a8fd8"/><path d="M2 12l4-4h11l-4 4z" fill="#f3ea20" stroke="#333"/>` },
  { name: "Supports", on: true, art: svg`<path d="M10 2l6 7H4z" fill="#f3ea20" stroke="#333"/><path d="M4 10h12M5 13l2-2M9 13l2-2M13 13l2-2" stroke="#333" stroke-width="1.500"/>` },
  { name: "Sections", art: svg`<path d="M4 4l3-1v6l6-3h3l-7 6-5-3z" fill="#f0e020" stroke="#bb9"/>` },
  { name: "Local axes", art: svg`<path d="M9 2v6h7M9 8l-6 5" fill="none" stroke="#888" stroke-width="2"/><path d="M9 2v6h7" fill="none" stroke="#d8d020"/>` },
  { name: "Panels", on: true, art: svg`<path d="M2 10l4-5h12l-4 5z" fill="#f3ea20" stroke="#222" stroke-width="1.500"/>` },
  { name: "Loads", art: svg`<path d="M3 11V7h10v4M6 7v4M10 7v4M16 3v7M15 8l1 2 2-2" fill="none" stroke="#dccf20"/><path d="M2 12h16" stroke="#f3ea20" stroke-width="1.500"/>` },
  { name: "Load values", art: svg`<path d="M3 2l1-1v5M7 2q3-1 2 1l-2 3h3M12 1h3l-2 2q3 1-1 3" fill="none" stroke="#2a8fd8"/><path d="M3 12V9h10v3M6 9v3M10 9v3M16 5v7M2 12h16" fill="none" stroke="#dccf20"/>` },
  { name: "Attributes", on: true, art: svg`<path d="M2 1h7v5H2zM2 3.500h7M5.500 1v5" fill="#f3ea20" stroke="#111"/><path d="M12 8h6v5h-6z" fill="#f3ea20" stroke="#111"/><path d="M12 3h4v3M4 8v3h5" fill="none" stroke="#2a6fb0" stroke-width="1.500"/>` },
];

@customElement("combo-box")
export class ComboBox extends LitElement {
  @property() label = "";
  @property() value = "";
  @property({ type: Boolean }) disabled = false;
  @property({ type: Boolean }) glyph = false;

  static styles = [
    base,
    css`
      :host { display: block; height: 21px; color: #444; }
      label { display: grid; align-items: center; height: 100%; }
      label > * { grid-area: 1 / 1; }
      select { appearance: none; width: 100%; height: 100%; margin: 0; border: 1px solid #707070; border-radius: 0; background: #fff; color: #111; font: 11px/15px "Liberation Sans", Arial, sans-serif; padding: 0 18px 0 3px; }
      select:disabled { background: #ccc; border-color: #c0c0c0; color: #7c7c7c; opacity: 1; }
      :host([disabled]) { color: #999; }
      :host([glyph]) select { padding-left: 22px; }
      .chev { justify-self: end; margin-right: 4px; pointer-events: none; }
      .glyph { margin-left: 4px; pointer-events: none; }
    `,
  ];

  render() {
    return html`<label>
      <select aria-label=${this.label} ?disabled=${this.disabled}><option>${this.value}</option></select>
      ${this.glyph
        ? html`<svg class="glyph" width="18" height="12" viewBox="0 0 18 12"><path d="M1 5l3-4h13v4h-2v6h-2V7H8v4H6V7H3v3H1z" fill="#f3e61a" stroke="#222"/><path d="M3 4l2-3h11v3z" fill="#857b10"/></svg>`
        : nothing}
      ${chevron}
    </label>`;
  }
}

@customElement("app-root")
export class AppRoot extends LitElement {
  static styles = [
    base,
    css`
      :host { display: flex; flex-direction: column; height: 100vh; overflow: hidden; background: #fff; color: #222; font: 12px/16px "Open Sans", "Noto Sans", sans-serif; }
      .top { position: relative; height: 25px; border-top: 3px solid #666; border-bottom: 1px solid #8c8c8c; background: linear-gradient(#f0f0f0, #c6c6c6); display: flex; align-items: center; padding: 0 4px 0 55px; flex: none; }
      .strip { position: absolute; left: 0; right: 0; top: -3px; height: 2px; background: linear-gradient(90deg, #fff 0 767px, #000 767px 961px, #999 961px 1203px, #fff 1203px); }
      .logo { position: absolute; left: 0; top: -3px; width: 41px; height: 19px; background: linear-gradient(90deg, #777, #b0b0b0 50%, #777); border: 1px solid #111; border-top: 0; display: flex; flex-direction: column; align-items: center; z-index: 1; }
      .logo svg { height: 8px; }
      .logo b { font: bold 8px/10px "DejaVu Sans", sans-serif; color: #111; }
      .menus { display: flex; gap: 22px; flex: 1; }
      .menus a { color: #333; text-decoration: none; }
      .win { display: flex; gap: 7px; }
      .tools { display: flex; align-items: center; height: 30px; background: #f0f0f0; border-bottom: 1px solid #999; border-right: 1px solid #999; width: fit-content; padding-left: 3px; flex: none; }
      .grip { width: 3px; height: 24px; background: radial-gradient(circle, #999 1px, transparent 1px) 0 0 / 3px 5px; flex: none; }
      .grip.mid { margin: 0 4px; }
      .group { display: flex; margin-right: 8px; }
      .group:last-of-type { margin-right: 2px; }
      .group button { width: 32px; height: 28px; }
      .framed { background: #f8f8f8; box-shadow: inset -1px 0 #999, inset 1px 1px #aaa; }
      .cell { width: 40px; height: 28px; }
      .c34 { width: 34px; }
      .c32 { width: 32px; }
      .c30 { width: 30px; }
      .w120 { width: 120px; }
      .w240 { width: 240px; }
      .w190 { width: 190px; }
      .body { flex: 1; display: flex; min-height: 0; border-top: 1px solid #666; background: #f0f0f0; }
      .left { width: 243px; border-right: 1px solid #888; flex: none; }
      .center { flex: 1; min-width: 0; display: flex; flex-direction: column; border-left: 1px solid #555; }
      .mid { flex: 1; display: flex; min-height: 0; }
      .stage { flex: 1; display: flex; flex-direction: column; min-width: 0; }
      .vtabs { display: flex; height: 23px; background: #f0f0f0; flex: none; align-items: flex-end; font-size: 11px; padding: 0 0 1px 1px; }
      .vtabs button { height: 20px; width: 37px; border: 1px solid #d5d5d5; border-width: 1px 1px 0 0; }
      .vtabs .on { width: 43px; height: 22px; background: #fff; padding: 0 6px 2px 0; }
      model-canvas { flex: 1; min-height: 0; }
      .vscroll { width: 18px; background: #f0f0f0; display: flex; flex-direction: column; align-items: center; border-right: 1px solid #888; flex: none; }
      .sbtn { width: 16px; height: 17px; }
      .sbtn.hot { background: #dadada; }
      .vthumb { height: 135px; width: 15px; margin-top: 217px; background: #c1c1c1; }
      .fill { flex: 1; }
      .bottom { height: 15px; display: flex; background: #f0f0f0; align-items: stretch; flex: none; padding-left: 1px; }
      .toggle { width: 23px; height: 15px; border: 1px solid #999; border-left-color: #fff; overflow: hidden; background: #f6f6f6; }
      .toggle.on { border: 1px solid #2364a5; background: #ddebf7; }
      .hbtn { width: 24px; }
      .hthumb { width: 320px; margin-left: 201px; background: #c1c1c1; }
      .side { width: 34px; flex: none; background: #fff; }
      .sidebar { background: #f0f0f0; border-bottom: 1px solid #888; border-left: 1px solid #fff; padding: 3px 0 0 1px; }
      .sidegrip { height: 4px; margin: 0 3px 2px; background: radial-gradient(circle, #999 1px, transparent 1px) 0 0 / 5px 4px; }
      .sgroup { margin-bottom: 8px; }
      .sgroup:last-child { margin: 0; }
      .sgroup button { width: 28px; height: 29px; }
    `,
  ];

  private tool(name: string, cls: string) {
    return html`<button class="cell ${cls}" aria-label=${name}>${icon(name)}</button>`;
  }

  render() {
    const combo = (label: string, value: string, cls: string, disabled = false, glyph = false): TemplateResult =>
      html`<combo-box class=${cls} label=${label} value=${value} ?disabled=${disabled} ?glyph=${glyph}></combo-box>`;
    return html`
      <header class="top">
        <div class="strip"></div>
        <div class="logo"><svg width="24" height="8" viewBox="0 0 24 8"><path d="M1 0h7v6H1zM11 0h6l6 6h-7z" fill="#eea31c"/><path d="M8 0h3l2 3H8z" fill="#b8720f"/></svg><b>PRO</b></div>
        <nav class="menus">${menus.map((m) => html`<a href="#">${m}</a>`)}</nav>
        <div class="win">
          <svg width="10" height="10" viewBox="0 0 10 10"><path d="M1 7.500h8" stroke="#222" stroke-width="2"/></svg>
          <svg width="10" height="10" viewBox="0 0 10 10"><path d="M3 3V1h6v5H7M1 4h6v5H1z" fill="none" stroke="#222" stroke-width="1.500"/></svg>
          <svg width="9" height="10" viewBox="0 0 9 10"><path d="M1 1l7 8M8 1L1 9" stroke="#222" stroke-width="1.700"/></svg>
        </div>
      </header>
      <div class="tools">
        <span class="grip"></span>
        ${mainTools.map((g) => html`<div class="group">${g.map((n) => html`<button class=${classMap({ framed: framed.has(n) })} aria-label=${n}>${icon(n)}</button>`)}</div>`)}
        ${combo("Layout", "Geometry", "w190", false, true)}
      </div>
      <div class="tools">
        <span class="grip"></span>
        ${this.tool("nodeq", "c34")}${combo("Nodes", "", "w120")}
        ${this.tool("barq", "")}${combo("Bars", "", "w120")}
        ${this.tool("handq", "c32")}${this.tool("view3", "")}${this.tool("solid", "c32")}
        ${this.tool("loadq", "")}${combo("Cases", "3 : ASCE 7-10 / IBC 2012 Direction_X", "w240")}
        ${this.tool("diagq", "c32")}${this.tool("waveq", "")}${combo("Modes", "1..10, SRSS", "w120", true)}
        <span class="grip mid"></span>
        ${this.tool("bld1", "framed c30")}${combo("Stories", "Story 1,Story 2", "w120")}
        ${this.tool("bld2", "c32")}${this.tool("bldq", "c32")}${this.tool("down3", "c32")}${this.tool("up3", "c32")}
      </div>
      <main class="body">
        <object-inspector class="left"></object-inspector>
        <section class="center">
          <div class="mid">
            <div class="stage">
              <div class="vtabs"><button class="on">View</button><button>Plan</button></div>
              <model-canvas></model-canvas>
            </div>
            <div class="vscroll">
              <button class="sbtn hot" aria-label="Scroll up">${arrow("up")}</button>
              <div class="vthumb"></div><div class="fill"></div>
              <button class="sbtn" aria-label="Scroll down">${arrow("down")}</button>
            </div>
          </div>
          <div class="bottom">
            ${toggles.map((t) => html`<button class=${classMap({ toggle: true, on: !!t.on })} aria-label=${t.name}><svg width="20" height="14" viewBox="0 0 20 14">${t.art}</svg></button>`)}
            <button class="hbtn" aria-label="Scroll left">${arrow("left")}</button>
            <div class="hthumb"></div><div class="fill"></div>
            <button class="hbtn" aria-label="Scroll right">${arrow("right")}</button>
            <button class="toggle" aria-label="Hide diagrams"><svg width="20" height="14" viewBox="0 0 20 14"><path d="M2 9q5-7 8-1t8-2" fill="none" stroke="#2a6fb0" stroke-width="1.500"/><path d="M4 3l12 9M16 2L4 12" stroke="#d22" stroke-width="1.600"/></svg></button>
            <button class="toggle" aria-label="Diagrams"><svg width="20" height="14" viewBox="0 0 20 14"><path d="M2 7h16" stroke="#555"/><path d="M2 7q4-6 8 0t8 0" fill="none" stroke="#2a8fd8" stroke-width="1.500"/></svg></button>
            <button class="toggle" aria-label="Display"><svg width="20" height="14" viewBox="0 0 20 14"><path d="M2 7q8-9 16 0-8 7-16 0z" fill="#cdd" stroke="#777"/><circle cx="10" cy="7" r="3.500" fill="#27a5a5"/><circle cx="10" cy="7" r="1.500" fill="#324"/></svg></button>
            <svg width="18" height="15" viewBox="0 0 18 15"><path d="M13 4h2M9 8h2M13 8h2M5 12h2M9 12h2M13 12h2" stroke="#aaa" stroke-width="2"/></svg>
          </div>
        </section>
        <aside class="side"><div class="sidebar">
          <div class="sidegrip"></div>
          ${sideTools.map((g) => html`<div class="sgroup">${g.map((n) => html`<button aria-label=${n}>${icon(n)}</button>`)}</div>`)}
        </div></aside>
      </main>
    `;
  }
}
